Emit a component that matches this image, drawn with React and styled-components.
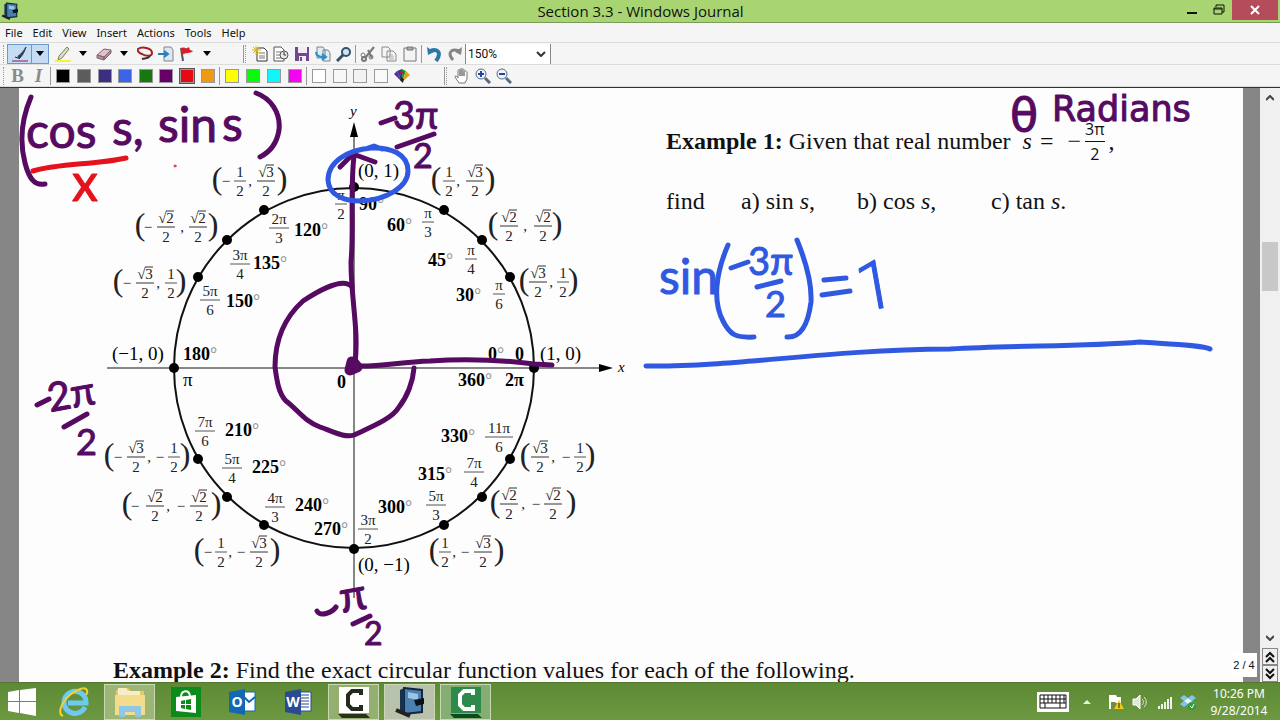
import React from 'react'
import styled, { createGlobalStyle } from 'styled-components'

const swatches = ["#000000", "#5c5c5c", "#3a2f80", "#3d63e8", "#17780f", "#660066", "#e60a14", "#ee9a12"]
const markers = ["#ffff00", "#0cf80c", "#10f4fa", "#f404f0"]
const menus = ["File", "Edit", "View", "Insert", "Actions", "Tools", "Help"]

const purple = "#560a62"
const blue = "#3059e2"
const red = "#e4121c"

const dots = [
    [354, 187], [444, 210], [482, 240], [510, 277], [534, 368], [510, 459],
    [482, 497], [444, 525], [354, 549], [264, 525], [227, 497], [198, 459],
    [174, 368], [198, 277], [227, 240], [264, 210],
]

const degrees = [
    ["120", 294, 236], ["135", 253, 269], ["150", 226, 307], ["180", 183, 360],
    ["210", 225, 436], ["225", 252, 473], ["240", 295, 511], ["270", 314, 535],
    ["300", 378, 513], ["315", 418, 480], ["330", 441, 442], ["360", 458, 386],
    ["30", 456, 301], ["45", 428, 266], ["60", 387, 231], ["90", 359, 210], ["0", 488, 360],
]

const radians = [
    ["2π", "3", 279, 228], ["3π", "4", 240, 264], ["5π", "6", 210, 300], ["7π", "6", 205, 431],
    ["5π", "4", 232, 468], ["4π", "3", 275, 507], ["3π", "2", 368, 529], ["5π", "3", 436, 505],
    ["7π", "4", 474, 472], ["11π", "6", 499, 437], ["π", "6", 499, 294], ["π", "4", 471, 259],
    ["π", "3", 428, 222], ["π", "2", 341, 204],
]

// left paren, right paren, middle, then [kind, x] for each part
const points = [
    [217, 282, 181, [["-", 226], ["1", 240], [",", 250], ["3", 266]]],
    [140, 213, 227, [["-", 148], ["2", 166], [",", 182], ["2", 198]]],
    [118, 181, 283, [["-", 127], ["3", 145], [",", 158], ["1", 171]]],
    [436, 490, 181, [["1", 449], [",", 458], ["3", 475]]],
    [493, 557, 226, [["2", 509], [",", 525], ["2", 543]]],
    [524, 573, 282, [["3", 538], [",", 551], ["1", 563]]],
    [109, 185, 457, [["-", 118], ["3", 136], [",", 149], ["-", 160], ["1", 174]]],
    [127, 216, 506, [["-", 135], ["2", 155], [",", 168], ["-", 181], ["2", 199]]],
    [199, 275, 552, [["-", 208], ["1", 221], [",", 230], ["-", 241], ["3", 259]]],
    [434, 499, 552, [["1", 445], [",", 454], ["-", 465], ["3", 483]]],
    [495, 571, 504, [["2", 509], [",", 523], ["-", 536], ["2", 553]]],
    [525, 590, 457, [["3", 540], [",", 553], ["-", 566], ["1", 580]]],
]

const Fraction = ({ top, bottom, x, y }) => (
    <g>
        <Small x={x} y={y - 4}>{top}</Small>
        <path d={`M${x - top.length * 4 - 2} ${y}h${top.length * 8 + 4}`} stroke="#555" strokeWidth="1" />
        <Small x={x} y={y + 15}>{bottom}</Small>
    </g>
)

const Root = ({ n, x, y }) => (
    <g>
        <Small x={x} y={y - 4}>{"√" + n}</Small>
        <path d={`M${x} ${y - 16}h8M${x - 9} ${y}h18`} stroke="#333" strokeWidth="1" />
        <Small x={x} y={y + 15}>2</Small>
    </g>
)

const Point = ({ left, right, y, parts }) => (
    <g>
        <Paren x={left} y={y + 8}>(</Paren>
        {parts.map(([kind, x]) => {
            if (kind === "-") return <Small key={x} x={x} y={y + 5}>−</Small>
            if (kind === ",") return <Small key={x} x={x} y={y + 5}>,</Small>
            if (kind === "1") return <Fraction key={x} top="1" bottom="2" x={x} y={y} />
            return <Root key={x} n={kind} x={x} y={y} />
        })}
        <Paren x={right} y={y + 8}>)</Paren>
    </g>
)

const UnitCircle = () => (
    <Figure viewBox="89 88 577 560">
        <g fill="none" stroke="#111">
            <circle cx="354" cy="368" r="180" strokeWidth="2" />
            <path d="M107 368H602M354 130V598" strokeWidth="1" />
        </g>
        <path d="M613 368l-14-4v8zM354 122l-4 15h8z" />
        {dots.map(([x, y]) => <circle key={x + "-" + y} cx={x} cy={y} r="5" />)}
        {degrees.map(([label, x, y]) => (
            <Degree key={label} x={x} y={y}>{label}<tspan fill="#999">°</tspan></Degree>
        ))}
        {radians.map(([top, bottom, x, y]) => <Fraction key={x + "-" + y} top={top} bottom={bottom} x={x} y={y} />)}
        {points.map(([left, right, y, parts]) => (
            <Point key={left + "-" + y} left={left} right={right} y={y} parts={parts} />
        ))}
        <Label x="112" y="360">(−1, 0)</Label>
        <Label x="540" y="360">(1, 0)</Label>
        <Label x="358" y="177">(0, 1)</Label>
        <Label x="358" y="571">(0, −1)</Label>
        <Degree x="515" y="360">0</Degree>
        <Degree x="337" y="388">0</Degree>
        <Degree x="505" y="386">2π</Degree>
        <Label x="183" y="386">π</Label>
        <Axis x="350" y="116">y</Axis>
        <Axis x="618" y="372">x</Axis>
    </Figure>
)

const Ink = () => (
    <InkLayer viewBox="19 88 1224 594">
        <Strokes color={purple}>
            <path d="M31 97C22 118 19 140 25 163C29 178 34 186 45 184" />
            <path d="M256 93C270 98 281 112 279 130C277 143 270 152 260 157" />
            <path d="M381 123l14-5M397 147l37-13" />
            <path d="M340 167L353 154L375 162" />
            <path d="M354 156C350 190 354 230 351 262C351 300 359 330 355 364" />
            <path d="M352 287C343 276 315 293 303 301C283 319 275 342 275 367C277 382 279 394 286 401C298 410 304 421 320 427C334 432 345 438 354 435C371 427 392 419 399 407C407 397 413 382 414 368" />
            <path d="M356 366C380 367 400 362 430 361C470 358 510 361 534 364L552 365" />
            <path d="M353 362l4 5l-7 3l2-8z" strokeWidth="11" />
            <path d="M37 405l12-6M64 427l23-13" />
            <path d="M317 611C320 617 332 613 336 607" />
            <path d="M353 624l17-8" />
        </Strokes>
        <Strokes color={blue}>
            <path d="M371 148C347 150 328 162 328 180C329 195 343 201 361 201C386 200 408 187 408 171C408 154 391 147 371 148ZM368 148l6-2l8 3" />
            <path d="M728 245C715 275 713 302 723 321C730 335 736 338 754 337" />
            <path d="M797 240C806 262 812 283 811 302C808 325 801 338 787 337" />
            <path d="M731 268l17-6M757 287l24-6" />
            <path d="M824 280l22-2M822 295l28-4" />
            <path d="M646 366C740 367 820 350 950 349C1020 345 1080 347 1140 342C1170 344 1203 345 1210 349" />
        </Strokes>
        <Strokes color={red}>
            <path d="M33 171C60 163 95 165 126 158" />
            <circle cx="175" cy="166" r="1" strokeWidth="1" />
        </Strokes>

        <Hand x="26" y="148" size={48} color={purple}>cos</Hand>
        <Hand x="112" y="145" size={48} color={purple}>s,</Hand>
        <Hand x="158" y="142" size={48} color={purple}>sin</Hand>
        <Hand x="222" y="141" size={48} color={purple}>s</Hand>
        <Hand x="393" y="129" size={38} color={purple}>3π</Hand>
        <Hand x="413" y="168" size={34} color={purple}>2</Hand>
        <Hand x="50" y="412" size={40} color={purple} transform="rotate(-10 50 412)">2π</Hand>
        <Hand x="76" y="455" size={36} color={purple}>2</Hand>
        <Hand x="342" y="613" size={44} color={purple} transform="rotate(-10 342 613)">π</Hand>
        <Hand x="364" y="645" size={32} color={purple}>2</Hand>
        <Hand x="1010" y="131" size={46} color={purple} $wide>θ</Hand>
        <Hand x="1052" y="121" size={35} color={purple} $wide>Radians</Hand>
        <Hand x="72" y="201" size={52} color={red}>x</Hand>
        <Hand x="659" y="294" size={48} color={blue}>sin</Hand>
        <Hand x="748" y="275" size={38} color={blue}>3π</Hand>
        <Hand x="765" y="317" size={36} color={blue}>2</Hand>
        <StraightHand x="856" y="309" size={68} color={blue} transform="rotate(-10 874 284)">1</StraightHand>
    </InkLayer>
)

const Icon = ({ children, size = 16, box = 16 }) => (
    <svg width={size} height={size} viewBox={`0 0 ${box} ${box}`} fill="none" aria-hidden="true">{children}</svg>
)

const Journal = ({ size = 16 }) => (
    <Icon size={size}>
        <path d="M5 1l9 1v11l-9 1z" fill="#4a7fb0" stroke="#12263c" />
        <path d="M5 1v13l-2-2V2z" fill="#17324f" />
        <path d="M7 3l5 1v3l-5-1z" fill="#9ac4e4" />
        <path d="M10 7l5-1v3l-4 1z" fill="#0c1118" />
        <path d="M1 12l7 3" stroke="#222" strokeWidth="2" />
    </Icon>
)

const PenIcon = () => (
    <Icon>
        <path d="M14 1C12 7 10 10 7 13L6 10C8 9 11 6 14 1z" fill="#2b3f55" stroke="#2b3f55" />
        <path d="M3 11l3 1" stroke="#222" />
        <path d="M0 15h16" stroke="#a01050" />
    </Icon>
)
const HighlighterIcon = () => (
    <Icon>
        <path d="M12 1l2 2-7 9-4 2 1-4z" fill="#d9dfbf" stroke="#7a8168" />
        <path d="M0 15h16" stroke="#f5f23c" strokeWidth="2" />
    </Icon>
)
const EraserIcon = () => (
    <Icon>
        <path d="M1 9l7-6 7 1-7 7z" fill="#e4c0ce" stroke="#7d6570" />
        <path d="M1 9l7 2v3l-7-2zM8 11l7-7v3l-7 7z" fill="#b78a9c" stroke="#7d6570" />
    </Icon>
)
const LassoIcon = () => (
    <Icon>
        <path d="M1 3C5 0 15 2 15 7C15 11 8 10 5 8C2 7 0 5 1 3z" stroke="#a52121" strokeWidth="2" />
        <path d="M13 10c-2 3-5 2-8 3" stroke="#333" strokeWidth="2" />
    </Icon>
)
const InsertIcon = () => (
    <Icon>
        <path d="M6 1h7l2 3v11H6z" fill="#dfe8f0" stroke="#7b8794" />
        <path d="M0 8h8M6 5l4 3-4 3" stroke="#1f7fc2" strokeWidth="2" />
    </Icon>
)
const FlagIcon = () => (
    <Icon>
        <path d="M2 2l2 13" stroke="#4c5560" strokeWidth="2" />
        <path d="M2 2c4-2 5 2 8-1l1 3 3 1c-3 3-7 1-11 4z" fill="#d8202c" />
    </Icon>
)
const NewIcon = () => (
    <Icon>
        <path d="M5 2h7l3 3v10H5z" fill="#fff" stroke="#333" />
        <path d="M7 7h6M7 10h6M7 12h6" stroke="#777" />
        <path d="M0 4h9M4 0v9M1 1l6 6M7 1L1 7" stroke="#d5ba19" />
    </Icon>
)
const NoteIcon = () => (
    <Icon>
        <path d="M1 1h7l3 3v11H1z" fill="#fff" stroke="#555" />
        <path d="M3 6h5M3 9h4M3 12h5" stroke="#777" />
        <circle cx="11" cy="9" r="4" fill="#e8e8e8" stroke="#555" />
        <path d="M11 6v3h2" stroke="#333" />
    </Icon>
)
const SaveIcon = () => (
    <Icon>
        <path d="M1 1h14v14H1z" fill="#71478f" />
        <path d="M4 1h9v6H4zM5 10h7v5H5z" fill="#f1edf5" />
        <path d="M6 11h2v4H6z" fill="#71478f" />
    </Icon>
)
const SendIcon = () => (
    <Icon>
        <path d="M2 1h6l2 3v8H2zM8 4h5l2 3v8H8z" fill="#e4edf3" stroke="#75848f" />
        <path d="M1 6c0 5 5 5 8 5M7 8l4 3-4 3" stroke="#2a8cc6" strokeWidth="2" />
    </Icon>
)
const FindIcon = () => (
    <Icon>
        <circle cx="10" cy="6" r="4" fill="#cfe5f5" stroke="#36516b" strokeWidth="2" />
        <path d="M7 9l-6 6" stroke="#36516b" strokeWidth="3" />
    </Icon>
)
const CutIcon = () => (
    <Icon>
        <path d="M14 1L5 12M8 4l4 8" stroke="#777" strokeWidth="2" />
        <circle cx="4" cy="13" r="2" stroke="#777" strokeWidth="2" />
        <circle cx="11" cy="11" r="2" stroke="#777" />
        <circle cx="3" cy="9" r="2" stroke="#777" />
    </Icon>
)
const CopyIcon = () => (
    <Icon>
        <path d="M1 1h6l2 2v8H1zM6 5h6l3 3v7H6z" fill="#f5f5f5" stroke="#888" />
        <path d="M8 9h4M8 11h5M8 13h5" stroke="#aaa" />
    </Icon>
)
const PasteIcon = () => (
    <Icon>
        <path d="M2 2h12v13H2z" fill="#f3f3f3" stroke="#777" />
        <path d="M5 1h6v3H5z" fill="#aaa" stroke="#777" />
    </Icon>
)
const UndoIcon = ({ color }) => (
    <Icon>
        <path d="M4 5c8-3 12 2 6 10" stroke={color} strokeWidth="4" />
        <path d="M1 1l1 8 6-3z" fill={color} />
    </Icon>
)
const RedoIcon = ({ color }) => (
    <Icon>
        <path d="M12 5C4 2 0 7 6 14" stroke={color} strokeWidth="3" />
        <path d="M15 1l-1 8-6-3z" fill={color} />
    </Icon>
)
const PaletteIcon = () => (
    <Icon>
        <path d="M8 14L0 6l3-3z" fill="#5b2c91" />
        <path d="M8 14L3 3l5-2z" fill="#2c3e9c" />
        <path d="M8 14V1l4 2z" fill="#2c9c3a" />
        <path d="M8 14l4-11 4 4z" fill="#d9a51c" />
        <path d="M6 3h4v3H6z" fill="#b0203c" />
        <path d="M7 9l3 2-1 4-3-3z" fill="#222" />
    </Icon>
)
const HandIcon = () => (
    <Icon>
        <path d="M5 15L1 9c0-2 2-1 3 1V3c0-2 2-2 2 0v5V2c0-2 2-2 2 0v6V2c0-2 2-1 2 0v6V4c0-2 3-1 3 0v7l-2 4z" fill="#fff" stroke="#777" />
    </Icon>
)
const ZoomIcon = ({ plus }) => (
    <Icon>
        <circle cx="6" cy="6" r="5" fill="#eef4fb" stroke="#59697c" />
        <path d={plus ? "M3 6h6M6 3v6" : "M3 6h6"} stroke="#2343a8" strokeWidth="2" />
        <path d="M10 10l5 5" stroke="#59697c" strokeWidth="3" />
    </Icon>
)

const Camtasia = ({ ink }) => (
    <Icon size={32} box={32}>
        <path d="M1 1h30v26H1z" fill={ink ? "#2c8a4b" : "#fff"} />
        <path d="M0 28h28l4 4H4z" fill={ink ? "#0c4a20" : "#283218"} />
        <path d="M23 9V5h-9l-4 4v10l4 4h9v-4" stroke={ink ? "#fff" : "#222c1a"} strokeWidth="4" />
    </Icon>
)

const Office = ({ letter, color }) => (
    <Icon size={28} box={28}>
        <path d="M15 4h12v19H15z" fill="#fff" stroke={color} />
        {letter === "W"
            ? <path d="M17 7h8M17 10h8M17 13h8M17 16h8M17 19h8" stroke={color} />
            : <path d="M16 9l5 5 6-5" stroke={color} strokeWidth="2" />}
        <path d="M1 4l16-3v26L1 24z" fill={color} />
        <text x="9" y="19" fill="#fff" fontSize="14" fontWeight="bold" fontFamily="Open Sans, sans-serif" textAnchor="middle">{letter}</text>
    </Icon>
)

const Arrow = ({ label }) => (
    <Drop aria-label={label}>
        <svg width="8" height="5" viewBox="0 0 8 5"><path d="M0 0h8L4 5z" /></svg>
    </Drop>
)

const App = () => {
    const [color, setColor] = React.useState("#e60a14")
    const [zoom, setZoom] = React.useState("150%")

    return (
        <Window>
            <GlobalStyle />
            <TitleBar>
                <Journal size={18} />
                <Title>Section 3.3 - Windows Journal</Title>
                <Caption>
                    <CaptionButton aria-label="Minimize">
                        <svg width="12" height="12"><path d="M1 9h10" stroke="#111" strokeWidth="2" /></svg>
                    </CaptionButton>
                    <CaptionButton aria-label="Restore">
                        <svg width="12" height="12" fill="none" stroke="#111"><path d="M1 4h8v6H1zM3 3V1h8v7h-2M1 5h8" /></svg>
                    </CaptionButton>
                    <CloseButton aria-label="Close">
                        <svg width="10" height="10"><path d="M1 1l8 8M9 1L1 9" stroke="#fff" strokeWidth="2" /></svg>
                    </CloseButton>
                </Caption>
            </TitleBar>

            <MenuBar>
                {menus.map((item) => <MenuItem key={item}>{item}</MenuItem>)}
            </MenuBar>

            <Toolbar>
                <Grip />
                <PenButton aria-label="Pen"><PenIcon /></PenButton>
                <PenDrop aria-label="Pen options">
                    <svg width="8" height="5" viewBox="0 0 8 5"><path d="M0 0h8L4 5z" /></svg>
                </PenDrop>
                <Tool aria-label="Highlighter"><HighlighterIcon /></Tool>
                <Arrow label="Highlighter options" />
                <Tool aria-label="Eraser"><EraserIcon /></Tool>
                <Arrow label="Eraser options" />
                <Tool aria-label="Selection"><LassoIcon /></Tool>
                <Tool aria-label="Insert space"><InsertIcon /></Tool>
                <Tool aria-label="Flag"><FlagIcon /></Tool>
                <Arrow label="Flag options" />
                <Gap $width={25} />
                <Divider />
                <Grip />
                <Tool aria-label="New note"><NewIcon /></Tool>
                <Tool aria-label="New from template"><NoteIcon /></Tool>
                <Tool aria-label="Save"><SaveIcon /></Tool>
                <Tool aria-label="Import"><SendIcon /></Tool>
                <Tool aria-label="Find"><FindIcon /></Tool>
                <Divider />
                <Tool aria-label="Cut"><CutIcon /></Tool>
                <Tool aria-label="Copy"><CopyIcon /></Tool>
                <Tool aria-label="Paste"><PasteIcon /></Tool>
                <Divider />
                <Tool aria-label="Undo"><UndoIcon color="#2b79a8" /></Tool>
                <Tool aria-label="Redo"><RedoIcon color="#858585" /></Tool>
                <ZoomBox>
                    <ZoomSelect aria-label="Zoom" value={zoom} onChange={(e) => {
                        setZoom(e.target.value)
                    }}>
                        <option>100%</option>
                        <option>150%</option>
                        <option>200%</option>
                    </ZoomSelect>
                    <svg width="10" height="6" viewBox="0 0 10 6" fill="none"><path d="M1 1l4 4 4-4" stroke="#333" strokeWidth="2" /></svg>
                </ZoomBox>
            </Toolbar>

            <Toolbar>
                <Grip />
                <Letter aria-label="Bold">B</Letter>
                <Letter aria-label="Italic" $italic>I</Letter>
                <Divider />
                <Group $width={165}>
                    {swatches.map((c) => (
                        <Swatch key={c} aria-label={c} $color={c} $on={c === color} onClick={() => setColor(c)} />
                    ))}
                </Group>
                <Divider />
                <Group $width={83}>
                    {markers.map((c) => (
                        <Swatch key={c} aria-label={c} $color={c} $on={c === color} onClick={() => setColor(c)} />
                    ))}
                </Group>
                <Divider />
                <Group $width={103}>
                    <Swatch aria-label="Empty 1" $color="#fff" />
                    <Swatch aria-label="Empty 2" $color="#f7f7f7" />
                    <Swatch aria-label="Empty 3" $color="#f3f3f3" />
                    <Swatch aria-label="Empty 4" $color="#f9f9f9" />
                    <Tool aria-label="More colors"><PaletteIcon /></Tool>
                </Group>
                <Gap $width={31} />
                <Divider />
                <Grip />
                <Group $width={62}>
                    <Tool aria-label="Pan"><HandIcon /></Tool>
                    <Tool aria-label="Zoom in"><ZoomIcon plus /></Tool>
                    <Tool aria-label="Zoom out"><ZoomIcon /></Tool>
                </Group>
            </Toolbar>

            <Workspace>
                <Paper>
                    <UnitCircle />
                    <Exercise>
                        <Line>
                            <b>Example 1:</b> Given that real number
                            <Equation>
                                <i>s</i>
                                <span>=</span>
                                <Value>−<Ratio><Over>3π</Over><span>2</span></Ratio>,</Value>
                            </Equation>
                        </Line>
                        <Parts>
                            <span>find</span>
                            <span>a) sin <i>s</i>,</span>
                            <span>b) cos <i>s</i>,</span>
                            <span>c) tan <i>s</i>.</span>
                        </Parts>
                    </Exercise>
                    <NextExample>
                        <b>Example 2:</b> Find the exact circular function values for each of the following.
                    </NextExample>
                    <Ink />
                </Paper>
                <PageBadge>2 / 4</PageBadge>
                <Scroll>
                    <ScrollButton aria-label="Scroll up">
                        <svg width="8" height="6" fill="none"><path d="M0 5l4-4 4 4" stroke="#444" strokeWidth="2" /></svg>
                    </ScrollButton>
                    <Track><Thumb /></Track>
                    <ScrollButton aria-label="Scroll down">
                        <svg width="8" height="6" fill="none"><path d="M0 1l4 4 4-4" stroke="#444" strokeWidth="2" /></svg>
                    </ScrollButton>
                    <PageButton aria-label="Previous page">
                        <svg width="10" height="12" fill="none"><path d="M1 6l4-4 4 4M1 11l4-4 4 4" stroke="#111" strokeWidth="2" /></svg>
                    </PageButton>
                    <PageButton aria-label="Next page">
                        <svg width="10" height="12" fill="none"><path d="M1 1l4 4 4-4M1 6l4 4 4-4" stroke="#111" strokeWidth="2" /></svg>
                    </PageButton>
                </Scroll>
            </Workspace>

            <Taskbar>
                <Start aria-label="Start">
                    <Icon size={28} box={28}>
                        <path d="M0 4l11-2v11H0zM12 2l16-2v13H12zM0 14h11v11L0 23zM12 14h16v14l-16-3z" fill="#fff" />
                    </Icon>
                </Start>
                <Task aria-label="Internet Explorer">
                    <Icon size={32} box={32}>
                        <path d="M27 21A11 11 0 1 1 28 17H10" stroke="#6ccaf2" strokeWidth="5" />
                        <path d="M5 30C-3 27 7 9 20 4C28 0 31 4 28 9" stroke="#f4cf2e" strokeWidth="2" />
                    </Icon>
                </Task>
                <Task aria-label="File Explorer" $bg="#9bb675">
                    <Icon size={32} box={32}>
                        <path d="M2 5l3-3h9l3 3h13v24H2z" fill="#eac868" />
                        <path d="M4 2h8l2 3h12v4H4z" fill="#f8edc9" />
                        <path d="M1 9h30v20H1z" fill="#f3dc8c" />
                        <path d="M5 20h22v11h-6v-5H11v5H5z" fill="#8ec8e6" />
                    </Icon>
                </Task>
                <Task aria-label="Store">
                    <Icon size={30} box={30}>
                        <path d="M0 0h30v30H0z" fill="#0c8a1a" />
                        <path d="M5 10l20-2v18L5 24z" fill="#fff" />
                        <path d="M10 10c0-7 8-8 9-1" stroke="#fff" strokeWidth="2" />
                        <path d="M10 14l4-1v4h-4zM15 13l5-1v5h-5zM10 18h4v4l-4-1zM15 18h5v5l-5-1z" fill="#0c8a1a" />
                    </Icon>
                </Task>
                <Task aria-label="Outlook"><Office letter="O" color="#1368b4" /></Task>
                <Task aria-label="Word"><Office letter="W" color="#2a4a92" /></Task>
                <Task aria-label="Camtasia Studio" $bg="#94b070"><Camtasia /></Task>
                <Task aria-label="Windows Journal" $bg="#b9c2ac"><Journal size={32} /></Task>
                <Task aria-label="Camtasia Recorder" $bg="#86ae72"><Camtasia ink /></Task>
                <Tray>
                    <TrayButton aria-label="Touch keyboard">
                        <svg width="32" height="20" viewBox="0 0 32 20" fill="none">
                            <path d="M0 0h32v20H0z" fill="#fff" />
                            <path d="M3 3h26v13H3zM3 7h26M3 11h26M7 3v8M11 3v8M15 3v8M19 3v8M23 3v8M27 3v8M8 11v5M23 11v5" stroke="#111" />
                        </svg>
                    </TrayButton>
                    <TrayButton aria-label="Show hidden icons">
                        <svg width="8" height="4"><path d="M0 4l4-4 4 4z" fill="#e8f2d8" /></svg>
                    </TrayButton>
                    <TrayIcons>
                        <Icon>
                            <path d="M2 1v14" stroke="#fff" strokeWidth="2" />
                            <path d="M2 1h6l1 2h4v6H8L7 8H2z" fill="#fff" />
                            <path d="M11 6l5 9H6z" fill="#f4c91c" />
                            <path d="M11 9v5" stroke="#222" />
                        </Icon>
                        <Icon>
                            <path d="M1 5h3l4-4v14l-4-4H1z" fill="#dfe8d6" stroke="#fff" />
                            <path d="M10 5c2 2 2 4 0 6M12 3c3 3 3 7 0 10" stroke="#dfe8d6" />
                        </Icon>
                        <Icon>
                            <path d="M3 15v-3M6 15v-5M9 15V8M12 15V5M15 15V3" stroke="#eef4e6" strokeWidth="2" />
                        </Icon>
                        <Icon>
                            <path d="M4 1l4 3-4 3-4-3zM12 1l4 3-4 3-4-3zM4 7l4 3-4 3-4-3zM12 7l4 3-4 3-4-3z" fill="#7fc4f4" />
                            <path d="M8 4l4 3-4 3-4-3z" fill="#e9f5fd" />
                            <circle cx="12" cy="12" r="4" fill="#2f9e3c" />
                            <path d="M10 12l2 2 2-4" stroke="#fff" />
                        </Icon>
                    </TrayIcons>
                    <Clock>
                        <span>10:26 PM</span>
                        <span>9/28/2014</span>
                    </Clock>
                </Tray>
            </Taskbar>
        </Window>
    )
}

export default App

const GlobalStyle = createGlobalStyle`
* {
    box-sizing: border-box;
}
body {
    margin: 0;
    font-family: "Noto Sans", "Open Sans", sans-serif;
    color: #111;
}
button {
    padding: 0;
    border: none;
    background: none;
    font: inherit;
    color: inherit;
}
svg {
    display: block;
    flex: none;
}
`
const Window = styled.div`
height: 100vh;
display: flex;
flex-direction: column;
overflow: hidden;
background-color: #f5f5f5;
`
const TitleBar = styled.header`
height: 23px;
display: grid;
grid-template-columns: 1fr auto 1fr;
align-items: center;
padding-left: 1px;
background-color: #a8d572;
border-bottom: 1px solid #7d9a5a;
`
const Title = styled.h1`
margin: 0;
font-family: "Open Sans", sans-serif;
font-size: 15px;
font-weight: normal;
line-height: 22px;
`
const Caption = styled.div`
display: flex;
justify-content: flex-end;
align-self: start;
padding-right: 2px;
`
const CaptionButton = styled.button`
width: 27px;
height: 20px;
display: flex;
align-items: center;
justify-content: center;
`
const CloseButton = styled(CaptionButton)`
width: 46px;
background-color: #b44c5c;
`
const MenuBar = styled.nav`
height: 20px;
display: flex;
align-items: center;
gap: 10px;
padding-left: 5px;
border-bottom: 1px solid #dcdcdc;
`
const MenuItem = styled.button`
font-size: 11px;
line-height: 18px;
`
const Toolbar = styled.div`
height: 22px;
display: flex;
align-items: center;
padding-left: 3px;
border-bottom: 1px solid #dcdcdc;
`
const Grip = styled.div`
width: 1px;
height: 18px;
margin-right: 3px;
border-left: 1px dotted #999;
`
const Divider = styled.div`
width: 1px;
height: 18px;
margin: 0 1px;
background-color: #999;
`
const Gap = styled.div`
width: ${({ $width }) => $width}px;
`
const Tool = styled.button`
width: 21px;
height: 20px;
display: flex;
align-items: center;
justify-content: center;
`
const Drop = styled(Tool)`
width: 20px;
`
const PenButton = styled(Tool)`
width: 25px;
background-color: #c4dcf4;
border: 1px solid #6c9ac8;
`
const PenDrop = styled(PenButton)`
width: 17px;
margin-right: 3px;
border-left: none;
`
const ZoomBox = styled.div`
width: 86px;
height: 20px;
display: flex;
align-items: center;
padding-right: 4px;
background-color: #fff;
border-left: 1px solid #888;
border-right: 1px solid #888;
`
const ZoomSelect = styled.select`
flex: 1;
appearance: none;
border: none;
outline: none;
background: none;
padding: 0 2px;
font-family: Roboto, sans-serif;
font-size: 12px;
color: #111;
`
const Letter = styled(Tool)`
font-family: "Liberation Serif", serif;
font-size: 19px;
font-weight: bold;
font-style: ${({ $italic }) => ($italic ? "italic" : "normal")};
color: #8a8a8a;
`
const Group = styled.div`
width: ${({ $width }) => $width}px;
margin-left: 1px;
display: grid;
grid-auto-flow: column;
grid-auto-columns: 1fr;
align-items: center;
justify-items: center;
`
const Swatch = styled.button`
width: 14px;
height: 14px;
background-color: ${({ $color }) => $color};
border: 1px solid #999;
outline: ${({ $on }) => ($on ? "1px solid #555" : "none")};
`
const Workspace = styled.main`
flex: 1;
min-height: 0;
display: flex;
position: relative;
padding-left: 19px;
background-color: #868686;
border-top: 1px solid #333;
`
const Paper = styled.article`
flex: 1;
min-width: 0;
position: relative;
display: grid;
grid-template-columns: auto 1fr;
align-content: start;
overflow: hidden;
margin-right: 17px;
background-color: #fdfdfd;
font-family: "Liberation Serif", serif;
font-size: 24px;
line-height: 30px;
`
const Figure = styled.svg`
width: 577px;
height: 560px;
margin-left: 70px;
font-family: "Liberation Serif", serif;
`
const Small = styled.text`
font-size: 15px;
text-anchor: middle;
fill: #222;
`
const Paren = styled.text`
font-size: 32px;
text-anchor: middle;
fill: #222;
`
const Degree = styled.text`
font-size: 18px;
font-weight: bold;
`
const Label = styled.text`
font-size: 19px;
`
const Axis = styled.text`
font-size: 15px;
font-style: italic;
`
const InkLayer = styled.svg`
position: absolute;
top: 0;
left: 0;
width: 1224px;
height: 594px;
`
const Strokes = styled.g`
fill: none;
stroke: ${({ color }) => color};
stroke-width: 5px;
stroke-linecap: round;
stroke-linejoin: round;
`
const Hand = styled.text`
font-family: ${({ $wide }) => ($wide ? "" : "Lato, ")}"DejaVu Sans", sans-serif;
font-size: ${({ size }) => size}px;
fill: ${({ color }) => color};
stroke: ${({ color }) => color};
stroke-width: 1px;
stroke-linejoin: round;
`
const StraightHand = styled(Hand)`
font-family: Roboto, sans-serif;
font-weight: 300;
`
const Exercise = styled.section`
padding-top: 32px;
`
const Line = styled.p`
margin: 0;
height: 42px;
display: flex;
align-items: center;
gap: 6px;
white-space: nowrap;
`
const Equation = styled.span`
display: flex;
align-items: center;
gap: 8px;
padding-left: 6px;
`
const Value = styled.span`
display: flex;
align-items: center;
gap: 4px;
padding-left: 6px;
`
const Ratio = styled.span`
display: flex;
flex-direction: column;
align-items: center;
font-family: "Open Sans", sans-serif;
font-size: 16px;
line-height: 24px;
`
const Over = styled.span`
border-bottom: 1px solid #111;
`
const Parts = styled.p`
margin: 24px 0 0;
display: grid;
grid-template-columns: 75px 116px 134px auto;
`
const NextExample = styled.p`
grid-column: 1 / -1;
margin: 7px 0 0 94px;
`
const PageBadge = styled.div`
position: absolute;
right: 23px;
bottom: 5px;
width: 26px;
height: 24px;
background-color: #fff;
font-family: "Liberation Sans", sans-serif;
font-size: 11px;
line-height: 24px;
text-align: center;
`
const Scroll = styled.div`
width: 20px;
display: flex;
flex-direction: column;
background-color: #f0f0f0;
`
const ScrollButton = styled.button`
height: 20px;
display: flex;
align-items: center;
justify-content: center;
`
const Track = styled.div`
flex: 1;
padding: 134px 2px 0;
`
const Thumb = styled.div`
height: 49px;
background-color: #c8c8c8;
`
const PageButton = styled.button`
height: 17px;
margin: 0 2px;
display: flex;
align-items: center;
justify-content: center;
border: 1px solid #888;
`
const Taskbar = styled.footer`
height: 38px;
display: flex;
align-items: center;
gap: 5px;
background: linear-gradient(#5e8a36, #6b9840);
border-top: 1px solid #527a2e;
`
const Start = styled.button`
width: 43px;
display: flex;
justify-content: center;
`
const Task = styled.button`
width: 51px;
height: 36px;
display: flex;
align-items: center;
justify-content: center;
background-color: ${({ $bg }) => $bg || "transparent"};
border: 1px solid ${({ $bg }) => ($bg ? "#c9d8b2" : "transparent")};
`
const Tray = styled.div`
margin-left: auto;
display: flex;
align-items: center;
gap: 14px;
padding-right: 12px;
color: #fff;
`
const TrayButton = styled.button`
`
const TrayIcons = styled.div`
display: flex;
gap: 8px;
padding-left: 3px;
`
const Clock = styled.div`
width: 58px;
display: flex;
flex-direction: column;
text-align: center;
font-size: 12px;
line-height: 17px;
`
